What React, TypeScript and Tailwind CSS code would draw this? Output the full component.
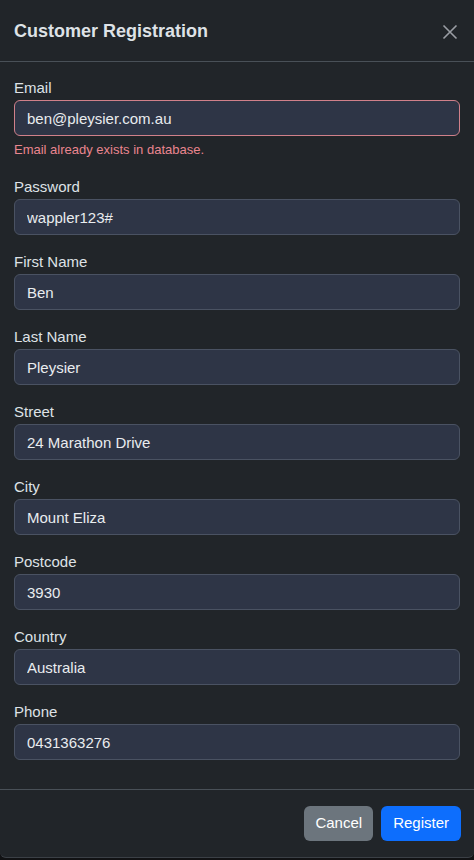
import React from "react";

type Field = {
  label: string;
  value: string;
  error?: string;
};

const fields: Field[] = [
  { label: "Email", value: "ben@pleysier.com.au", error: "Email already exists in database." },
  { label: "Password", value: "wappler123#" },
  { label: "First Name", value: "Ben" },
  { label: "Last Name", value: "Pleysier" },
  { label: "Street", value: "24 Marathon Drive" },
  { label: "City", value: "Mount Eliza" },
  { label: "Postcode", value: "3930" },
  { label: "Country", value: "Australia" },
  { label: "Phone", value: "0431363276" },
];

function FormRow({ field }: { field: Field }) {
  const invalid = !!field.error;
  return (
    <div className="mb-[15px]">
      <label className="block h-6 text-[15px] leading-6 text-[#dee2e6]">{field.label}</label>
      <input
        type="text"
        defaultValue={field.value}
        className={
          invalid
            ? "block h-9 w-full rounded-md border border-[#d0808a] bg-[#2e3546] px-3 text-[15px] text-[#e9ecef] outline-none"
            : "block h-9 w-full rounded-md border border-[#4a5262] bg-[#2e3546] px-3 text-[15px] text-[#e9ecef] outline-none"
        }
      />
      {invalid && (
        <div className="mt-1 text-[13px] leading-[20px] text-[#ea868f]">{field.error}</div>
      )}
    </div>
  );
}

export default function App() {
  return (
    <div
      className="min-h-[860px] w-[474px] bg-[#111214]"
      style={{ fontFamily: '"Liberation Sans", Arial, sans-serif' }}
    >
      <div className="rounded-b-md border-b border-[#3b4046] bg-[#212529]">
        {/* header */}
        <div className="flex h-[62px] items-center justify-between border-b border-[#495057] pl-[14px] pr-[12px] pt-[2px]">
          <h5 className="text-[18px] font-bold text-[#dee2e6]">Customer Registration</h5>
          <button type="button" className="flex h-6 w-6 items-center justify-center text-[#9a9ea4]">
            <svg width="16" height="16" viewBox="0 0 16 16" fill="none" stroke="currentColor" strokeWidth="1.6">
              <path d="M1.5 1.5l13 13M14.5 1.5l-13 13" />
            </svg>
          </button>
        </div>

        {/* body */}
        <div className="px-[14px] pb-[14px] pt-[14px]">
          {fields.map((f) => (
            <FormRow key={f.label} field={f} />
          ))}
        </div>

        {/* footer */}
        <div className="flex h-[68px] items-center justify-end gap-2 border-t border-[#495057] pr-[13px]">
          <button type="button" className="h-[35px] rounded-md bg-[#6c757d] px-[11px] text-[15px] text-white">
            Cancel
          </button>
          <button type="button" className="h-[35px] rounded-md bg-[#0d6efd] px-3 text-[15px] text-white">
            Register
          </button>
        </div>
      </div>
    </div>
  );
}
